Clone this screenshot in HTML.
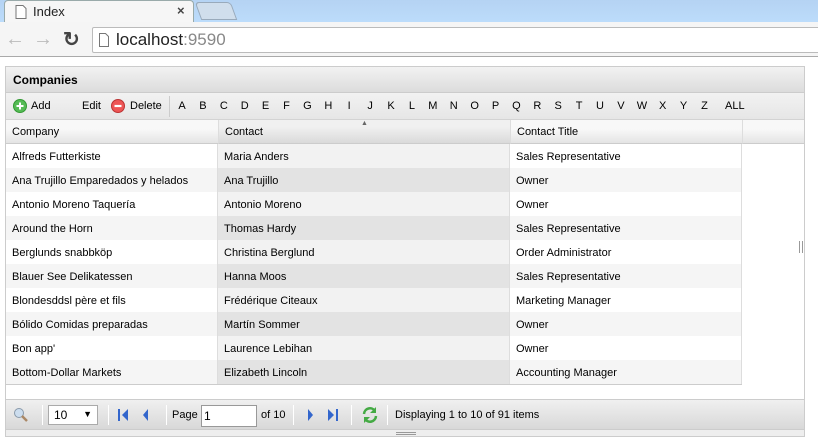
<!DOCTYPE html>
<html><head><meta charset="utf-8"><style>
*{box-sizing:border-box;margin:0;padding:0}
body{width:818px;height:446px;overflow:hidden;background:#fff;font-family:"Liberation Sans",Arial,sans-serif;font-size:11px;color:#000;position:relative}
.a{position:absolute}
.tabbar{left:0;top:0;width:818px;height:22px;background:linear-gradient(#b5d3f3,#bcdcfb)}
.tab{left:4px;top:0;width:190px;height:23px;background:#f6f6f6;border:1px solid #9aa;border-bottom:none;border-radius:4px 4px 0 0}
.nav{left:0;top:22px;width:818px;height:35px;background:#f5f5f5;border-bottom:1px solid #aaa}
.url{left:92px;top:27px;width:730px;height:26px;background:#fff;border:1px solid #bbb;border-radius:2px}
.panel{left:5px;top:66px;width:800px;height:371px;border:1px solid #ccc;background:#fff}
.title{left:0;top:0;width:798px;height:26px;background:linear-gradient(#f2f2f2,#dcdcdc);border-bottom:1px solid #ccc;font-weight:bold;font-size:12px;padding:6px 0 0 7px}
.tb{left:0;top:26px;width:798px;height:27px;background:linear-gradient(#f2f2f2,#e6e6e6);border-bottom:1px solid #d3d3d3}
.hdr{top:53px;height:24px;background:linear-gradient(#f8f8f8 40%,#e4e4e4);border-bottom:1px solid #ccc;padding:6px 0 0 6px}
.row{left:0;width:736px;height:24px}
.c{position:absolute;top:0;height:24px;padding:7px 0 0 6px;border-right:1px solid #ddd}
.pager{left:0;top:332px;width:798px;height:30px;background:linear-gradient(#f0f0f0,#d8d8d8);border-top:1px solid #ccc}
.sep{position:absolute;top:5px;width:1px;height:20px;background:#bbb;border-right:1px solid #fff}
</style></head><body>
<div class="a tabbar"></div>
<div class="a tab"><svg class="a" style="left:10px;top:4px" width="12" height="14"><path d="M1 .5h7l3 3v10H1z" fill="#fff" stroke="#777"/></svg><span class="a" style="left:28px;top:3px;font-size:13px;color:#222">Index</span><span class="a" style="left:172px;top:2px;font-size:13px;font-weight:bold;color:#444">×</span></div>
<div class="a" style="left:198px;top:2px;width:36px;height:18px;background:#d0deec;border:1px solid #9ab;border-radius:4px 4px 0 0;transform:skewX(20deg)"></div>
<div class="a nav"></div>
<span class="a" style="left:5px;top:28px;font-size:20px;color:#bbb">←</span>
<span class="a" style="left:33px;top:28px;font-size:20px;color:#bbb">→</span>
<span class="a" style="left:63px;top:27px;font-size:20px;color:#444;font-weight:bold">↻</span>
<div class="a url"></div>
<svg class="a" style="left:99px;top:33px" width="11" height="14"><path d="M.5 .5h6l3 3v10H.5z" fill="#fff" stroke="#777"/></svg>
<span class="a" style="left:116px;top:30px;font-size:17px;color:#222">localhost<span style="color:#888">:9590</span></span>
<div class="a panel">
<div class="a title">Companies</div>
<div class="a tb">
<svg class="a" style="left:7px;top:6px" width="14" height="14"><circle cx="7" cy="7" r="6.5" fill="#5b5" stroke="#393"/><path d="M7 3.5v7M3.5 7h7" stroke="#fff" stroke-width="2"/></svg>
<span class="a" style="left:25px;top:7px">Add</span>
<span class="a" style="left:76px;top:7px">Edit</span>
<svg class="a" style="left:105px;top:6px" width="14" height="14"><circle cx="7" cy="7" r="6.5" fill="#e55" stroke="#b33"/><path d="M3.5 7h7" stroke="#fff" stroke-width="2.2"/></svg>
<span class="a" style="left:124px;top:7px">Delete</span>
<div class="a" style="left:163px;top:3px;width:1px;height:21px;background:#ccc"></div>
<div id="let"></div>
</div>
<div class="a hdr" style="left:0;width:212px">Company</div>
<div class="a hdr" style="left:212px;width:292px;border-left:1px solid #ddd;background:linear-gradient(#f0f0f0 30%,#dadada)">Contact</div>
<div class="a" style="left:355px;top:53px;font-size:7px;color:#666">▲</div>
<div class="a hdr" style="left:504px;width:232px;border-left:1px solid #ddd">Contact Title</div>
<div class="a hdr" style="left:736px;width:62px;border-left:1px solid #ddd"></div>
<div id="rows"></div>
<div class="a" style="left:0;top:317px;width:736px;height:1px;background:#ccc"></div>
<div class="a" style="left:793px;top:174px;width:4px;height:12px;border-left:1px solid #999;border-right:1px solid #999"></div>
<div class="a pager">
<svg class="a" style="left:7px;top:7px" width="16" height="16"><circle cx="6" cy="6" r="4.5" fill="#cde" stroke="#89a"/><path d="M9 9l5 5" stroke="#a86" stroke-width="2.5"/></svg>
<div class="sep" style="left:36px"></div>
<div class="a" style="left:42px;top:5px;width:50px;height:20px;background:#fff;border:1px solid #aaa;padding:2px 0 0 5px;font-size:12px">10<span style="position:absolute;right:5px;top:3px;font-size:9px">▼</span></div>
<div class="sep" style="left:102px"></div>
<svg class="a" style="left:112px;top:8px" width="40" height="14"><path d="M1 1v12" stroke="#36c" stroke-width="2"/><path d="M10 1L4 7l6 6z" fill="#36c"/><path d="M30 1l-5 6 5 6z" fill="#36c"/></svg>
<div class="sep" style="left:160px"></div>
<span class="a" style="left:166px;top:9px">Page</span>
<div class="a" style="left:195px;top:5px;width:56px;height:22px;background:#fff;border:1px solid #999;padding:3px 0 0 2px;font-size:12px">1</div>
<span class="a" style="left:255px;top:9px">of 10</span>
<div class="sep" style="left:287px"></div>
<svg class="a" style="left:300px;top:8px" width="40" height="14"><path d="M2 1l5 6-5 6z" fill="#36c"/><path d="M22 1l6 6-6 6z" fill="#36c"/><path d="M31 1v12" stroke="#36c" stroke-width="2"/></svg>
<div class="sep" style="left:345px"></div>
<svg class="a" style="left:355px;top:6px" width="18" height="18"><path d="M3 8a6 6 0 0 1 11-3M15 10a6 6 0 0 1-11 3" fill="none" stroke="#4a4" stroke-width="2.5"/><path d="M15 1v6h-6zM3 17v-6h6z" fill="#4a4"/></svg>
<div class="sep" style="left:381px"></div>
<span class="a" style="left:389px;top:9px">Displaying 1 to 10 of 91 items</span>
</div>
<div class="a" style="left:0;top:362px;width:798px;height:7px;background:#eee;border-top:1px solid #ccc"><div class="a" style="left:390px;top:2px;width:20px;height:3px;border-top:1px solid #999;border-bottom:1px solid #999"></div></div>
</div>
<script>
var L="ABCDEFGHIJKLMNOPQRSTUVWXYZ",h="";
for(var i=0;i<26;i++){h+='<span class="a" style="left:'+(171+i*20.9)+'px;top:7px;width:10px;text-align:center">'+L[i]+'</span>';}
h+='<span class="a" style="left:719px;top:7px">ALL</span>';
document.getElementById("let").outerHTML=h;
var d=[["Alfreds Futterkiste","Maria Anders","Sales Representative"],["Ana Trujillo Emparedados y helados","Ana Trujillo","Owner"],["Antonio Moreno Taquería","Antonio Moreno","Owner"],["Around the Horn","Thomas Hardy","Sales Representative"],["Berglunds snabbköp","Christina Berglund","Order Administrator"],["Blauer See Delikatessen","Hanna Moos","Sales Representative"],["Blondesddsl père et fils","Frédérique Citeaux","Marketing Manager"],["Bólido Comidas preparadas","Martín Sommer","Owner"],["Bon app'","Laurence Lebihan","Owner"],["Bottom-Dollar Markets","Elizabeth Lincoln","Accounting Manager"]];
var r="";
for(var j=0;j<10;j++){var o=j%2;var bg=o?"#f5f5f5":"#fff",bc=o?"#e3e3e3":"#f2f2f2";
r+='<div class="a row" style="top:'+(77+j*24)+'px;background:'+bg+'"><div class="c" style="left:0;width:212px">'+d[j][0]+'</div><div class="c" style="left:212px;width:292px;background:'+bc+'">'+d[j][1]+'</div><div class="c" style="left:504px;width:232px">'+d[j][2]+'</div></div>';}
document.getElementById("rows").outerHTML=r;
</script>
</body></html>
